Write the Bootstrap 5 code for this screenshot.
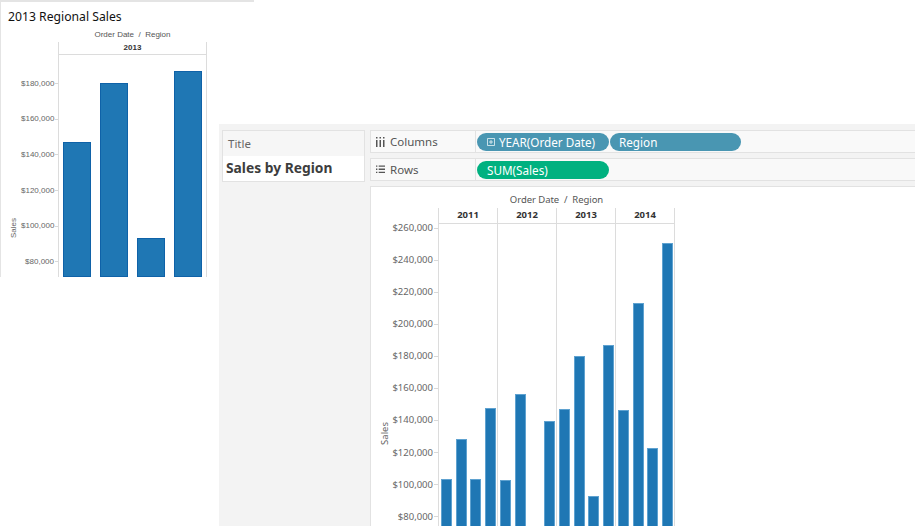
<!DOCTYPE html>
<html lang="en">
<head>
    <meta charset="UTF-8">
    <meta name="viewport" content="width=device-width, initial-scale=1.0">
    <title>Sales by Region</title>
    <link href="https://cdn.jsdelivr.net/npm/bootstrap@5.3.0/dist/css/bootstrap.min.css" rel="stylesheet">
    <style>
        html, body { height: 526px; overflow: hidden; background: #fff; }
        body { font-family: "Liberation Sans", Arial, sans-serif; color: #555; }
        .ui-font { font-family: "Noto Sans", "Open Sans", sans-serif; }

        /* small chart, top left */
        .mini { width: 254px; height: 277px; flex: none; border-top: 2px solid #e4e4e4; border-left: 1px solid #e4e4e4; overflow: hidden; }
        .mini-title { font-size: 12.2px; line-height: 16px; color: #111; padding: 7px 0 0 7px; height: 26px; }
        .mini .axis-sales { width: 20px; padding-top: 190px; padding-left: 9px; font-size: 8px; }
        .mini .axis-ticks { width: 37px; padding-top: 38px; font-size: 8px; }
        .mini .tick { height: 35.6px; }
        .mini .tick::after { width: 3px; }
        .mini .plot-col { width: 149px; }
        .mini .caption { font-size: 8px; line-height: 14px; height: 14px; }
        .mini .years { font-size: 8px; height: 13px; line-height: 12px; }
        .mini .year { width: 149px; padding: 0 4px; gap: 9px; height: 222px; }
        .mini .bar { width: 28px; border: 1px solid #0f62a8; }

        /* big panel */
        .panel { flex: 1 0 auto; width: 696px; margin: 124px 0 0 -35px; padding: 6px 0 0 3px; background: #f3f3f3; height: 402px; overflow: hidden; gap: 5px; }
        .title-box { width: 143px; height: 52px; flex: none; border: 1px solid #e2e2e2; background: #fff; }
        .title-head { height: 25px; background: #f6f6f6; font-size: 11.5px; line-height: 25px; padding-left: 5px; color: #666; }
        .title-text { font-size: 13.8px; line-height: 23px; padding-left: 3px; font-weight: 700; color: #3d3d3d; }
        .right-col { width: 550px; flex: none; gap: 5px; }
        .shelf { height: 23px; flex: none; border: 1px solid #e2e2e2; background: #f9f9f9; }
        .shelf-label { width: 105px; height: 100%; padding-left: 5px; gap: 5px; font-size: 11.5px; color: #555; border-right: 1px solid #e2e2e2; }
        .pill { height: 18px; width: 132px; border-radius: 9px; color: #fff; font-size: 11.7px; line-height: 18px; padding-left: 10px; margin-left: 1px; }
        .pill-wide { width: 131px; padding-left: 9px; }
        .pill-icon { gap: 4px; }
        .pill-blue { background: #4996b2; }
        .pill-green { background: #00b180; }
        .chart-box { background: #fff; border: 1px solid #e2e2e2; height: 345px; flex: none; }
        .big .axis-sales { width: 14px; padding-top: 235px; padding-left: 9px; font-size: 9.5px; }
        .big .axis-ticks { width: 53px; padding-top: 25px; font-size: 9.5px; }
        .big .tick { height: 32.1px; }
        .big .tick::after { width: 4px; }
        .big .plot-col { width: 237px; }
        .big .caption { font-size: 9.5px; line-height: 25px; height: 21px; letter-spacing: -.05px; }
        .big .years { font-size: 9.5px; height: 16px; line-height: 14px; }
        .big .year { width: 59px; padding: 0 0 0 2px; gap: 3.6px; height: 303px; }
        .big .bar { width: 11px; border: 1px solid #5fa2d0; border-bottom: 0; }

        .axis-sales span { writing-mode: vertical-rl; transform: rotate(180deg); display: block; line-height: 1; color: #666; }
        .axis-ticks { text-align: right; color: #666; }
        .tick { display: flex; align-items: center; justify-content: flex-end; }
        .tick::after { content: ""; height: 1px; background: #d8d8d8; margin-left: 1px; }
        .years > div { text-align: center; font-weight: 700; color: #333; border-right: 1px solid #dcdcdc; }
        .years { border-bottom: 1px solid #dcdcdc; border-left: 1px solid #dcdcdc; }
        .mini .years > div { width: 149px; }
        .big .years > div { width: 59px; }
        .plot { border-left: 1px solid #dcdcdc; }
        .year { border-right: 1px solid #dcdcdc; align-items: flex-end; }
        .bar { background: #1f77b4; flex: none; }
    </style>
</head>
<body class="d-flex align-items-start">

    <!-- 2013 chart -->
    <div class="mini">
        <div class="mini-title ui-font">2013 Regional Sales</div>
        <div class="d-flex">
            <div class="axis-sales"><span>Sales</span></div>
            <div class="axis-ticks">
                <div class="tick">$180,000</div>
                <div class="tick">$160,000</div>
                <div class="tick">$140,000</div>
                <div class="tick">$120,000</div>
                <div class="tick">$100,000</div>
                <div class="tick">$80,000</div>
            </div>
            <div class="plot-col">
                <div class="caption text-center">Order Date &nbsp;/&nbsp; Region</div>
                <div class="years d-flex"><div>2013</div></div>
                <div class="plot d-flex">
                    <div class="year d-flex">
                        <div class="bar" style="height: 135px"></div>
                        <div class="bar" style="height: 194px"></div>
                        <div class="bar" style="height: 39px"></div>
                        <div class="bar" style="height: 206px"></div>
                    </div>
                </div>
            </div>
        </div>
    </div>

    <!-- worksheet -->
    <div class="panel d-flex">
        <div class="title-box ui-font">
            <div class="title-head">Title</div>
            <div class="title-text">Sales by Region</div>
        </div>
        <div class="right-col d-flex flex-column ui-font">
            <div class="shelf d-flex align-items-center">
                <div class="shelf-label d-flex align-items-center">
                    <svg width="9" height="10" viewBox="0 0 9 10"><path d="M0 0h1.500v1.500H0zM3.500 0H5v1.500H3.500zM7 0h1.500v1.500H7zM0 3h1.500v7H0zM3.500 3H5v7H3.500zM7 3h1.500v7H7z" fill="#555"/></svg>
                    Columns
                </div>
                <div class="pill pill-icon pill-blue d-flex align-items-center">
                    <svg width="8" height="8" viewBox="0 0 8 8"><path d="M.5.5h7v7h-7zM4 2v4M2 4h4" fill="none" stroke="#fff" stroke-opacity=".7"/></svg>
                    YEAR(Order Date)
                </div>
                <div class="pill pill-wide pill-blue">Region</div>
            </div>
            <div class="shelf d-flex align-items-center">
                <div class="shelf-label d-flex align-items-center">
                    <svg width="9" height="9" viewBox="0 0 10 9"><path d="M0 0h1.500v1.500H0zM3 0h7v1.500H3zM0 3.500h1.500V5H0zM3 3.500h7V5H3zM0 7h1.500v1.500H0zM3 7h7v1.500H3z" fill="#555"/></svg>
                    Rows
                </div>
                <div class="pill pill-green">SUM(Sales)</div>
            </div>
            <div class="chart-box big d-flex">
                <div class="axis-sales"><span>Sales</span></div>
                <div class="axis-ticks">
                    <div class="tick">$260,000</div>
                    <div class="tick">$240,000</div>
                    <div class="tick">$220,000</div>
                    <div class="tick">$200,000</div>
                    <div class="tick">$180,000</div>
                    <div class="tick">$160,000</div>
                    <div class="tick">$140,000</div>
                    <div class="tick">$120,000</div>
                    <div class="tick">$100,000</div>
                    <div class="tick">$80,000</div>
                </div>
                <div class="plot-col">
                    <div class="caption text-center">Order Date &nbsp;/&nbsp; Region</div>
                    <div class="years d-flex">
                        <div>2011</div><div>2012</div><div>2013</div><div>2014</div>
                    </div>
                    <div class="plot d-flex">
                        <div class="year d-flex">
                            <div class="bar" style="height: 48px"></div>
                            <div class="bar" style="height: 88px"></div>
                            <div class="bar" style="height: 48px"></div>
                            <div class="bar" style="height: 119px"></div>
                        </div>
                        <div class="year d-flex">
                            <div class="bar" style="height: 47px"></div>
                            <div class="bar" style="height: 133px"></div>
                            <div class="bar" style="height: 0; border: 0"></div>
                            <div class="bar" style="height: 106px"></div>
                        </div>
                        <div class="year d-flex">
                            <div class="bar" style="height: 118px"></div>
                            <div class="bar" style="height: 171px"></div>
                            <div class="bar" style="height: 31px"></div>
                            <div class="bar" style="height: 182px"></div>
                        </div>
                        <div class="year d-flex">
                            <div class="bar" style="height: 117px"></div>
                            <div class="bar" style="height: 224px"></div>
                            <div class="bar" style="height: 79px"></div>
                            <div class="bar" style="height: 284px"></div>
                        </div>
                    </div>
                </div>
            </div>
        </div>
    </div>

    <script src="https://cdn.jsdelivr.net/npm/bootstrap@5.3.0/dist/js/bootstrap.bundle.min.js"></script>
</body>
</html>
